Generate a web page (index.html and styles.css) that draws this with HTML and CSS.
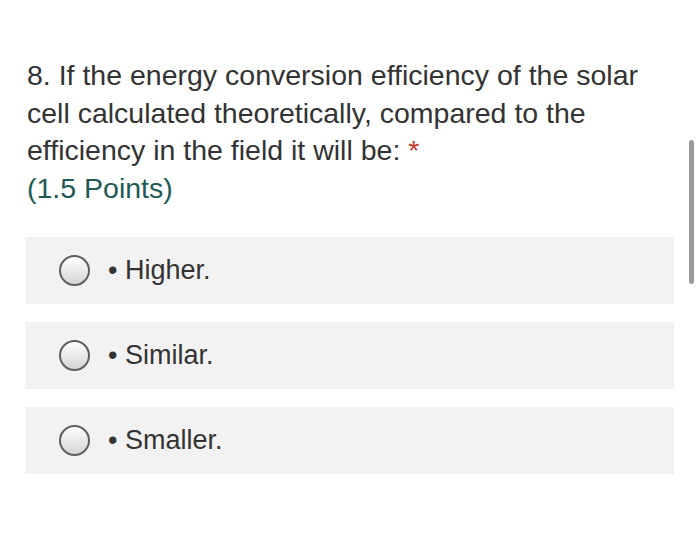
FILE: index.html
```html
<!DOCTYPE html>
<html>
<head>
<meta charset="utf-8">
<link rel="stylesheet" href="styles.css">
</head>
<body>
<div class="page">
  <div class="question">
    <div class="title">8. If the energy conversion efficiency of the solar cell calculated theoretically, compared to the efficiency in the field it will be: <span class="req">*</span></div>
    <div class="points">(1.5 Points)</div>
  </div>
  <div class="options">
    <label class="option"><span class="radio"></span><span class="text">• Higher.</span></label>
    <label class="option"><span class="radio"></span><span class="text">• Similar.</span></label>
    <label class="option"><span class="radio"></span><span class="text">• Smaller.</span></label>
  </div>
</div>
<div class="scrollbar"></div>
</body>
</html>
```
FILE: styles.css
```css
html, body {
  margin: 0;
  padding: 0;
  background: #ffffff;
}
body {
  font-family: "Liberation Sans", Arial, sans-serif;
  color: #333333;
  width: 700px;
  height: 545px;
  overflow: hidden;
}
.page {
  padding: 57px 0 0 25px;
  width: 649px;
}
.question {
  padding-left: 2px;
  font-size: 28.5px;
  line-height: 37.5px;
}
.req {
  color: #c8372d;
}
.points {
  color: #1d5a56;
}
.options {
  margin-top: 30px;
  display: flex;
  flex-direction: column;
  gap: 18px;
}
.option {
  display: flex;
  align-items: center;
  height: 67px;
  background: #f2f2f2;
  box-sizing: border-box;
  padding-left: 34px;
}
.radio {
  width: 27px;
  height: 27px;
  border: 2px solid #5e5e5e;
  border-radius: 50%;
  background: linear-gradient(#ffffff, #d4d4d4);
  flex: none;
}
.text {
  margin-left: 18px;
  font-size: 27px;
  color: #333333;
}
.scrollbar {
  position: absolute;
  left: 689px;
  top: 140px;
  width: 5px;
  height: 144px;
  border-radius: 3px;
  background: #9a9a9a;
}
```
